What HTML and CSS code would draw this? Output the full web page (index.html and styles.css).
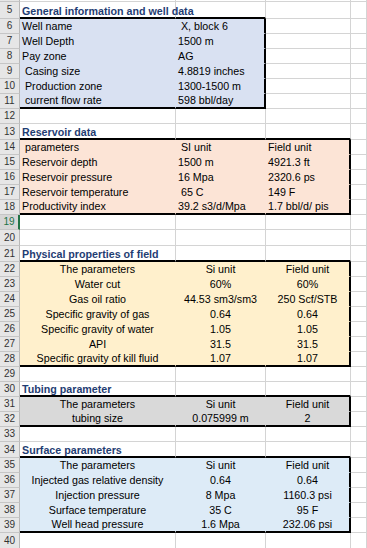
FILE: index.html
```html
<!DOCTYPE html>
<html>
<head>
<meta charset="utf-8">
<link rel="stylesheet" href="styles.css">
</head>
<body>
<div class="sheet">
  <div class="row stub"><div class="hd"></div><div class="c a"></div><div class="c b"></div><div class="c cc"></div><div class="c d"></div></div>

  <div class="row r17"><div class="hd">5</div><div class="c a head tb"><span>General information and well data</span></div><div class="c b tb"></div><div class="c cc"></div><div class="c d"></div></div>
  <div class="row"><div class="hd">6</div><div class="c a f1">Well name</div><div class="c b f1 tr">&nbsp;X, block 6</div><div class="c cc"></div><div class="c d"></div></div>
  <div class="row"><div class="hd">7</div><div class="c a f1">Well Depth</div><div class="c b f1 tr">1500 m</div><div class="c cc"></div><div class="c d"></div></div>
  <div class="row"><div class="hd">8</div><div class="c a f1">Pay zone</div><div class="c b f1 tr">AG</div><div class="c cc"></div><div class="c d"></div></div>
  <div class="row"><div class="hd">9</div><div class="c a f1">&nbsp;Casing size</div><div class="c b f1 tr">4.8819 inches</div><div class="c cc"></div><div class="c d"></div></div>
  <div class="row"><div class="hd">10</div><div class="c a f1">&nbsp;Production zone</div><div class="c b f1 tr">1300-1500 m</div><div class="c cc"></div><div class="c d"></div></div>
  <div class="row"><div class="hd">11</div><div class="c a f1 tb">&nbsp;current flow rate</div><div class="c b f1 tr tb">598 bbl/day</div><div class="c cc"></div><div class="c d"></div></div>
  <div class="row"><div class="hd">12</div><div class="c a"></div><div class="c b"></div><div class="c cc"></div><div class="c d"></div></div>

  <div class="row r16"><div class="hd">13</div><div class="c a head tb">Reservoir data</div><div class="c b tb"></div><div class="c cc tb"></div><div class="c d"></div></div>
  <div class="row"><div class="hd">14</div><div class="c a f2">&nbsp;parameters</div><div class="c b f2">&nbsp;SI unit</div><div class="c cc f2 tr">Field unit</div><div class="c d"></div></div>
  <div class="row"><div class="hd">15</div><div class="c a f2">Reservoir depth</div><div class="c b f2">1500 m</div><div class="c cc f2 tr">4921.3 ft</div><div class="c d"></div></div>
  <div class="row"><div class="hd">16</div><div class="c a f2">Reservoir pressure</div><div class="c b f2">16 Mpa</div><div class="c cc f2 tr">2320.6 ps</div><div class="c d"></div></div>
  <div class="row"><div class="hd">17</div><div class="c a f2">Reservoir temperature</div><div class="c b f2">&nbsp;65 C</div><div class="c cc f2 tr">149 F</div><div class="c d"></div></div>
  <div class="row"><div class="hd">18</div><div class="c a f2 tb">Productivity index</div><div class="c b f2 tb">39.2 s3/d/Mpa</div><div class="c cc f2 tr tb">1.7 bbl/d/ pis</div><div class="c d"></div></div>
  <div class="row"><div class="hd sel">19</div><div class="c a"></div><div class="c b"></div><div class="c cc"></div><div class="c d"></div></div>
  <div class="row r16"><div class="hd">20</div><div class="c a"></div><div class="c b"></div><div class="c cc"></div><div class="c d"></div></div>

  <div class="row r16"><div class="hd">21</div><div class="c a head tb">Physical properties of field</div><div class="c b tb"></div><div class="c cc tb"></div><div class="c d"></div></div>
  <div class="row"><div class="hd">22</div><div class="c a f3 ctr">The parameters</div><div class="c b f3 ctr">Si unit</div><div class="c cc f3 ctr tr">Field unit</div><div class="c d"></div></div>
  <div class="row"><div class="hd">23</div><div class="c a f3 ctr">Water cut</div><div class="c b f3 ctr">60%</div><div class="c cc f3 ctr tr">60%</div><div class="c d"></div></div>
  <div class="row"><div class="hd">24</div><div class="c a f3 ctr">Gas oil ratio</div><div class="c b f3 ctr">44.53 sm3/sm3</div><div class="c cc f3 ctr tr">250 Scf/STB</div><div class="c d"></div></div>
  <div class="row"><div class="hd">25</div><div class="c a f3 ctr">Specific gravity of gas</div><div class="c b f3 ctr">0.64</div><div class="c cc f3 ctr tr">0.64</div><div class="c d"></div></div>
  <div class="row"><div class="hd">26</div><div class="c a f3 ctr">Specific gravity of water</div><div class="c b f3 ctr">1.05</div><div class="c cc f3 ctr tr">1.05</div><div class="c d"></div></div>
  <div class="row"><div class="hd">27</div><div class="c a f3 ctr">API</div><div class="c b f3 ctr">31.5</div><div class="c cc f3 ctr tr">31.5</div><div class="c d"></div></div>
  <div class="row"><div class="hd">28</div><div class="c a f3 ctr tb">Specific gravity of kill fluid</div><div class="c b f3 ctr tb">1.07</div><div class="c cc f3 ctr tr tb">1.07</div><div class="c d"></div></div>
  <div class="row"><div class="hd">29</div><div class="c a"></div><div class="c b"></div><div class="c cc"></div><div class="c d"></div></div>

  <div class="row"><div class="hd">30</div><div class="c a head tb">Tubing parameter</div><div class="c b tb"></div><div class="c cc tb"></div><div class="c d"></div></div>
  <div class="row"><div class="hd">31</div><div class="c a f4 ctr">The parameters</div><div class="c b f4 ctr">Si unit</div><div class="c cc f4 ctr tr">Field unit</div><div class="c d"></div></div>
  <div class="row"><div class="hd">32</div><div class="c a f4 ctr tb">tubing size</div><div class="c b f4 ctr tb">0.075999 m</div><div class="c cc f4 ctr tr tb">2</div><div class="c d"></div></div>
  <div class="row"><div class="hd">33</div><div class="c a"></div><div class="c b"></div><div class="c cc"></div><div class="c d"></div></div>

  <div class="row r16"><div class="hd">34</div><div class="c a head tb">Surface parameters</div><div class="c b tb"></div><div class="c cc tb"></div><div class="c d"></div></div>
  <div class="row"><div class="hd">35</div><div class="c a f5 ctr">The parameters</div><div class="c b f5 ctr">Si unit</div><div class="c cc f5 ctr tr">Field unit</div><div class="c d"></div></div>
  <div class="row"><div class="hd">36</div><div class="c a f5 ctr">Injected gas relative density</div><div class="c b f5 ctr">0.64</div><div class="c cc f5 ctr tr">0.64</div><div class="c d"></div></div>
  <div class="row"><div class="hd">37</div><div class="c a f5 ctr">Injection pressure</div><div class="c b f5 ctr">8 Mpa</div><div class="c cc f5 ctr tr">1160.3 psi</div><div class="c d"></div></div>
  <div class="row"><div class="hd">38</div><div class="c a f5 ctr">Surface temperature</div><div class="c b f5 ctr">35 C</div><div class="c cc f5 ctr tr">95 F</div><div class="c d"></div></div>
  <div class="row"><div class="hd">39</div><div class="c a f5 ctr tb">Well head pressure</div><div class="c b f5 ctr tb">1.6 Mpa</div><div class="c cc f5 ctr tr tb">232.06 psi</div><div class="c d"></div></div>
  <div class="row r16"><div class="hd">40</div><div class="c a"></div><div class="c b"></div><div class="c cc"></div><div class="c d"></div></div>
</div>
</body>
</html>
```

FILE: styles.css
```css
html, body {
  margin: 0;
  padding: 0;
  background: #ffffff;
  overflow: hidden;
}

.sheet {
  width: 367px;
  display: flex;
  flex-direction: column;
  font-family: "Liberation Sans", Arial, sans-serif;
  font-size: 10.7px;
  color: #000000;
}

.row {
  display: flex;
  height: 15px;
  flex: none;
}

.row.stub { height: 2px; }
.row.r16 { height: 16px; }
.row.r17 { height: 17px; }

.hd {
  box-sizing: border-box;
  flex: none;
  width: 20px;
  height: 100%;
  background: #e6e6e6;
  border-right: 1px solid #b8b8b8;
  border-bottom: 1px solid #c6c6c6;
  display: flex;
  align-items: center;
  justify-content: center;
  font-size: 10px;
  line-height: 12px;
  color: #333333;
}

.hd.sel {
  background: #d6d6d6;
  color: #217346;
  border-right: 2px solid #217346;
}

.c {
  box-sizing: border-box;
  flex: none;
  height: 100%;
  border-right: 1px solid #d4d4d4;
  border-bottom: 1px solid #d4d4d4;
  display: flex;
  align-items: flex-end;
  justify-content: flex-start;
  padding: 0 2px 1px 2px;
  line-height: 12px;
  white-space: nowrap;
}

.a { width: 156px; }
.b { width: 90px; }
.cc { width: 85px; }
.d { flex: 1 1 auto; }

.ctr { justify-content: center; }

.head {
  font-weight: bold;
  color: #1f3d73;
  padding-bottom: 0;
  position: relative;
  z-index: 1;
}

.f1 { background: #d9e1f2; border-right-color: #d9e1f2; border-bottom-color: #d9e1f2; }
.f2 { background: #fce4d6; border-right-color: #fce4d6; border-bottom-color: #fce4d6; }
.f3 { background: #fff0cc; border-right-color: #fff0cc; border-bottom-color: #fff0cc; }
.f4 { background: #d9d9d9; border-right-color: #d9d9d9; border-bottom-color: #d9d9d9; }
.f5 { background: #ddebf7; border-right-color: #ddebf7; border-bottom-color: #ddebf7; }

.tb { border-bottom: 2px solid #000000; }
.tr { border-right: 2px solid #000000; }
```
